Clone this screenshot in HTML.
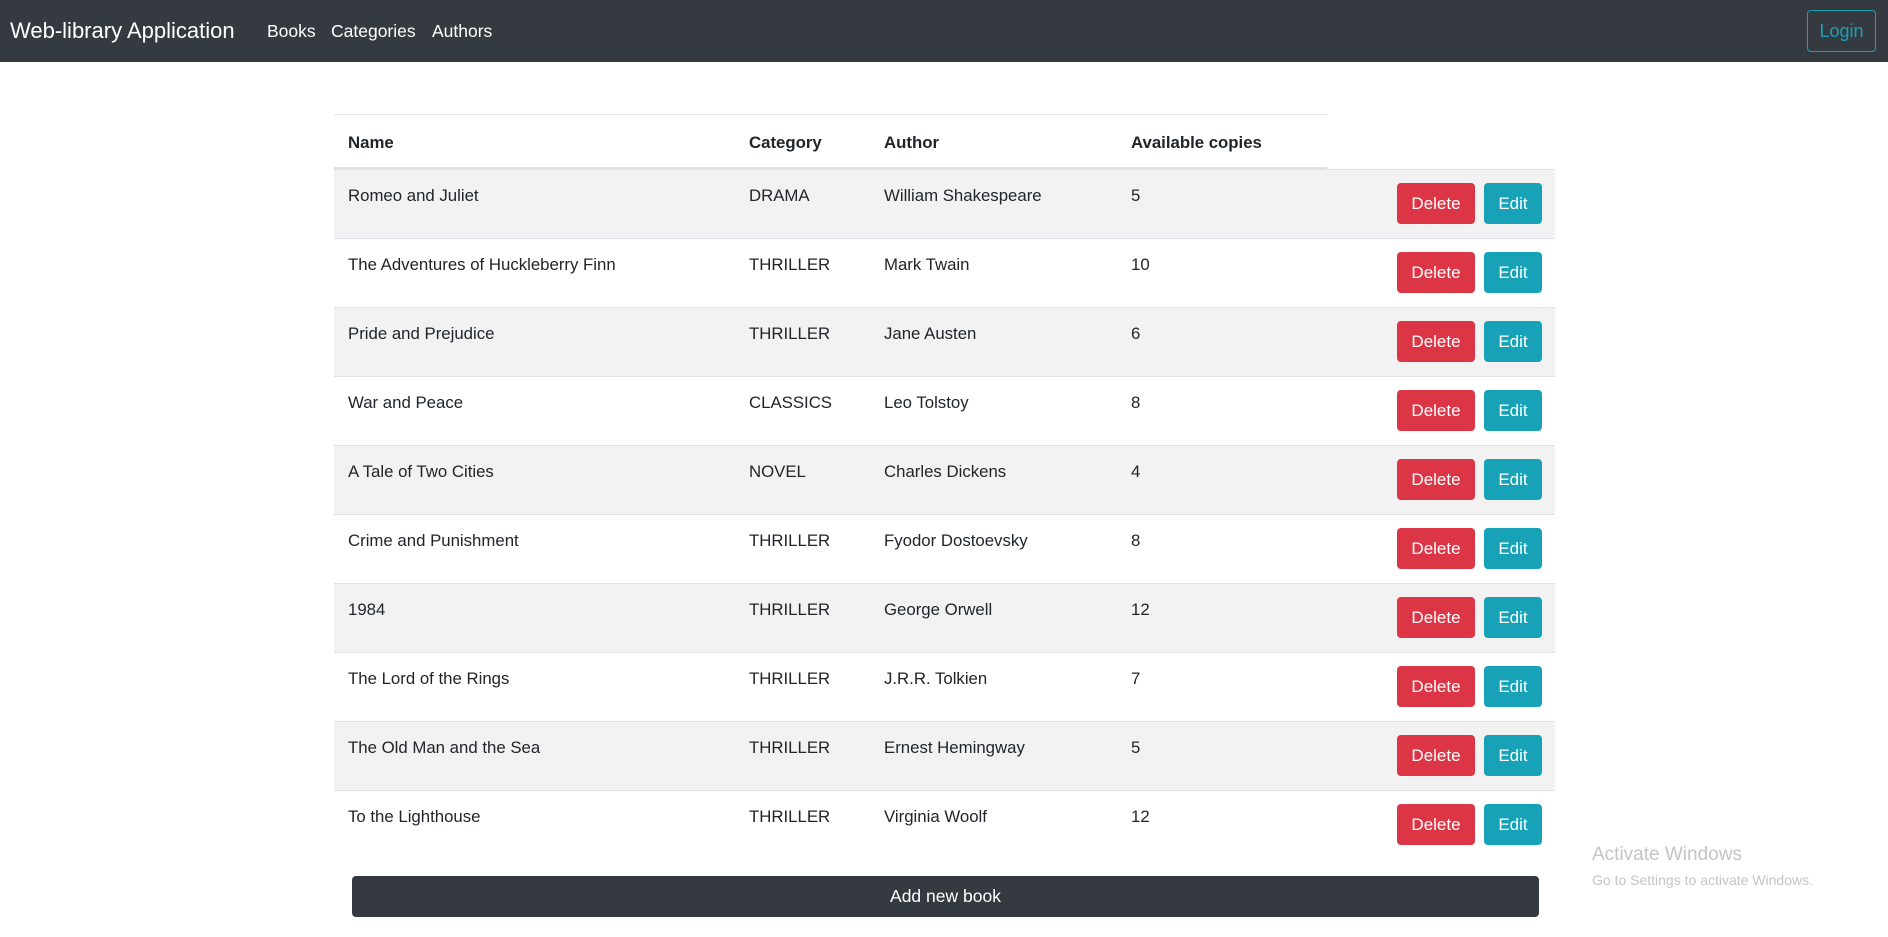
<!DOCTYPE html>
<html><head><meta charset="utf-8"><style>
*{margin:0;padding:0;box-sizing:border-box}
body{width:1888px;height:937px;background:#fff;font-family:"Liberation Sans",sans-serif;color:#212529;position:relative;overflow:hidden}
.nav{position:absolute;left:0;top:0;width:1888px;height:62px;background:#343a40}
.nav span{position:absolute;color:#fff;white-space:nowrap}
.a{position:absolute;white-space:nowrap;font-size:16.8px;line-height:22px}
.row{position:absolute;left:334px;width:1221px;height:69px;border-top:1.5px solid #dee2e6}
.row.s{background:#f2f2f2}
.btn{position:absolute;height:41px;border-radius:4px;color:#fff;font-size:17px;line-height:41px;text-align:center}
</style></head><body>
<div class="nav">
<span style="left:10px;top:18px;font-size:22px">Web-library Application</span>
<span style="left:267px;top:21px;font-size:17.5px">Books</span>
<span style="left:331px;top:21px;font-size:17.5px">Categories</span>
<span style="left:432px;top:21px;font-size:17.5px">Authors</span>
<div style="position:absolute;left:1807px;top:10px;width:69px;height:42px;border:1px solid #17a2b8;border-radius:4px;color:#17a2b8;font-size:18px;line-height:40px;text-align:center">Login</div>
</div>
<div style="position:absolute;left:334px;top:114px;width:993px;height:1px;background:#dee2e6"></div>
<div style="position:absolute;left:334px;top:167px;width:993px;height:2px;background:#dee2e6"></div>
<div class="a" style="left:348px;top:132px;font-weight:bold">Name</div>
<div class="a" style="left:749px;top:132px;font-weight:bold">Category</div>
<div class="a" style="left:884px;top:132px;font-weight:bold">Author</div>
<div class="a" style="left:1131px;top:132px;font-weight:bold">Available copies</div>

<div class="row s" style="top:169px"></div>
<div class="row" style="top:238px"></div>
<div class="row s" style="top:307px"></div>
<div class="row" style="top:376px"></div>
<div class="row s" style="top:445px"></div>
<div class="row" style="top:514px"></div>
<div class="row s" style="top:583px"></div>
<div class="row" style="top:652px"></div>
<div class="row s" style="top:721px"></div>
<div class="row" style="top:790px;height:69px"></div>

<div id="c"></div>
<script>
var d=[["Romeo and Juliet","DRAMA","William Shakespeare","5"],["The Adventures of Huckleberry Finn","THRILLER","Mark Twain","10"],["Pride and Prejudice","THRILLER","Jane Austen","6"],["War and Peace","CLASSICS","Leo Tolstoy","8"],["A Tale of Two Cities","NOVEL","Charles Dickens","4"],["Crime and Punishment","THRILLER","Fyodor Dostoevsky","8"],["1984","THRILLER","George Orwell","12"],["The Lord of the Rings","THRILLER","J.R.R. Tolkien","7"],["The Old Man and the Sea","THRILLER","Ernest Hemingway","5"],["To the Lighthouse","THRILLER","Virginia Woolf","12"]];
var h="",x=[348,749,884,1131];
d.forEach(function(r,i){var t=169+i*69;r.forEach(function(v,j){h+='<div class="a" style="left:'+x[j]+'px;top:'+(t+16)+'px">'+v+'</div>'});
h+='<div class="btn" style="left:1397px;top:'+(t+14)+'px;width:78px;background:#dc3545">Delete</div><div class="btn" style="left:1484px;top:'+(t+14)+'px;width:58px;background:#17a2b8">Edit</div>';});
document.getElementById("c").innerHTML=h;
</script>
<div style="position:absolute;left:352px;top:876px;width:1187px;height:41px;background:#343a40;border-radius:4px;color:#fff;font-size:17.5px;line-height:41px;text-align:center">Add new book</div>
<div class="a" style="left:1592px;top:844px;font-size:19px;color:#c4c4c4">Activate Windows</div>
<div class="a" style="left:1592px;top:869px;font-size:14px;color:#c4c4c4">Go to Settings to activate Windows.</div>
</body></html>
